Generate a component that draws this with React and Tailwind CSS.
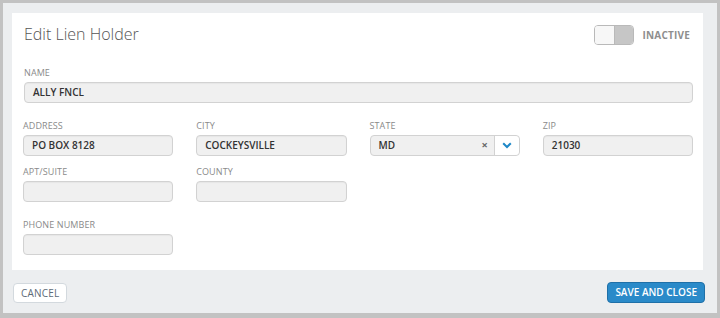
import React from "react";

const font = { fontFamily: '"Open Sans", "Noto Sans", sans-serif' };

function Label({ children }) {
  return (
    <div className="text-[9px] leading-[12px] text-[#8a8a8a] uppercase tracking-[0.1px] mb-[3px]">
      {children}
    </div>
  );
}

function Input({ value }) {
  return (
    <div className="h-[21px] rounded-[4px] border border-[#d2d2d2] bg-[#f0f0f0] shadow-[inset_0_1px_1px_rgba(0,0,0,0.04)] pl-[8px] flex items-center text-[10px] font-semibold text-[#333]">
      {value}
    </div>
  );
}

function Field({ label, value }) {
  return (
    <div>
      <Label>{label}</Label>
      <Input value={value} />
    </div>
  );
}

export default function App() {
  return (
    <div
      style={font}
      className="w-[720px] h-[318px] border-[3px] border-b-[5px] border-[#c2c2c2] bg-[#eceef0] flex flex-col"
    >
      <div className="ml-[9px] mr-[14px] mt-[10px] h-[257px] bg-white pl-[11px] pr-[10px] pt-[10px]">
        <div className="flex items-center justify-between h-[22px]">
          <div className="text-[16px] font-light text-[#555] pl-[1px]">Edit Lien Holder</div>
          <div className="flex items-center mr-[3px] mt-[2px]">
            <div className="w-[40px] h-[20px] rounded-[4px] border border-[#b9b9b9] flex overflow-hidden">
              <div className="flex-1 bg-[#f7f7f7]"></div>
              <div className="flex-1 bg-[#c6c6c6] border-l border-[#b9b9b9]"></div>
            </div>
            <div className="ml-[8px] text-[10px] font-bold text-[#8e8e8e] tracking-[0.2px]">INACTIVE</div>
          </div>
        </div>
        <div className="mt-[22px] pl-[1px]">
          <Field label="Name" value="ALLY FNCL" />
        </div>
        <div className="mt-[17px] grid grid-cols-4 gap-x-[23px]">
          <Field label="Address" value="PO BOX 8128" />
          <Field label="City" value="COCKEYSVILLE" />
          <div>
            <Label>State</Label>
            <div className="h-[21px] rounded-[4px] border border-[#d2d2d2] bg-[#f0f0f0] flex items-stretch text-[10px] font-semibold text-[#333]">
              <div className="flex-1 flex items-center pl-[8px]">MD</div>
              <div className="w-[18px] flex items-center justify-center text-[#666] text-[11px] font-bold">×</div>
              <div className="w-[25px] border-l border-[#d2d2d2] bg-white rounded-r-[4px] flex items-center justify-center">
                <svg width="10" height="7" viewBox="0 0 10 7">
                  <path d="M1.2 1.2 L5 5 L8.8 1.2" fill="none" stroke="#1e88c8" strokeWidth="2" />
                </svg>
              </div>
            </div>
          </div>
          <Field label="Zip" value="21030" />
        </div>
        <div className="mt-[10px] grid grid-cols-4 gap-x-[23px]">
          <Field label="Apt/Suite" value="" />
          <Field label="County" value="" />
        </div>
        <div className="mt-[17px] grid grid-cols-4 gap-x-[23px]">
          <Field label="Phone Number" value="" />
        </div>
      </div>
      <div className="flex-1 flex items-start justify-between pl-[10px] pr-[12px] pt-[13px]">
        <button className="h-[20px] px-[7px] rounded-[4px] border border-[#d3d9de] bg-white text-[10px] text-[#5d6b78] tracking-[0.2px]">
          CANCEL
        </button>
        <button className="h-[21px] -mt-[1px] px-[7px] rounded-[4px] border border-[#1f70a8] bg-[#2a8ac9] text-[10px] font-semibold text-white">
          SAVE AND CLOSE
        </button>
      </div>
    </div>
  );
}
